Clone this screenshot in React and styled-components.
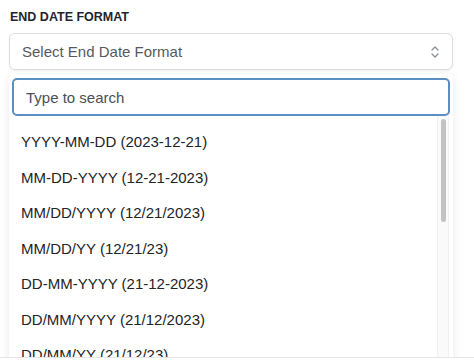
import React from 'react'
import styled, { createGlobalStyle } from 'styled-components'

const Global = createGlobalStyle`
    html, body {
        margin: 0;
        padding: 0;
        background: #ffffff;
        font-family: "Liberation Sans", Arial, sans-serif;
    }
    * {
        box-sizing: border-box;
    }
`;

const Page = styled.div`
    height: 358px;
    overflow: hidden;
    border-bottom: 1px solid #e6e6e6;
    padding: 10px 21px 0 9px;
`;

const Label = styled.div`
    font-size: 12.5px;
    font-weight: 700;
    letter-spacing: 0;
    color: #1f2430;
    padding-left: 1px;
    line-height: 15px;
`;

const Select = styled.div`
    margin-top: 8px;
    height: 37px;
    border: 1px solid #dcdcdc;
    border-radius: 6px;
    box-shadow: 0 1px 2px rgba(0, 0, 0, 0.05);
    display: flex;
    align-items: center;
    justify-content: space-between;
    padding: 0 12px 0 12px;
    font-size: 15px;
    color: #555a60;
`;

const Panel = styled.div`
    margin-top: 4px;
    padding: 4px 3px 0 3px;
    box-shadow: 0 2px 10px rgba(0, 0, 0, 0.09);
    border-radius: 4px;
`;

const Search = styled.input`
    width: 100%;
    height: 38px;
    border: 2px solid #5b8fc2;
    border-radius: 5px;
    padding: 0 12px;
    font-family: inherit;
    font-size: 15px;
    color: #333;
    outline: none;
    &::placeholder {
        color: #4a4f55;
    }
`;

const ListArea = styled.div`
    display: flex;
    height: 260px;
`;

const Items = styled.div`
    flex: 1;
    padding-top: 8px;
`;

const Item = styled.div`
    height: 35.5px;
    display: flex;
    align-items: center;
    padding-left: 9px;
    font-size: 15px;
    color: #222426;
`;

const Track = styled.div`
    width: 12px;
    margin-right: 1px;
    border-left: 1px solid #f0f0f0;
    border-right: 1px solid #f0f0f0;
    background: #fafafa;
    padding: 3px 2px 0 3px;
`;

const Thumb = styled.div`
    height: 103px;
    border-radius: 4px;
    background: #c2c2c2;
`;

const formats = [
    'YYYY-MM-DD (2023-12-21)',
    'MM-DD-YYYY (12-21-2023)',
    'MM/DD/YYYY (12/21/2023)',
    'MM/DD/YY (12/21/23)',
    'DD-MM-YYYY (21-12-2023)',
    'DD/MM/YYYY (21/12/2023)',
    'DD/MM/YY (21/12/23)',
    'DD.MM.YYYY (21.12.2023)',
];

function Chevrons() {
    return (
        <svg width="10" height="16" viewBox="0 0 10 16" fill="none" stroke="#8a8d92" strokeWidth="1.3" strokeLinecap="round" strokeLinejoin="round">
            <path d="M2 6 L5 3 L8 6" />
            <path d="M2 10 L5 13 L8 10" />
        </svg>
    )
}

export default function App() {
    return (
        <>
            <Global />
            <Page>
                <Label>END DATE FORMAT</Label>
                <Select>
                    <span>Select End Date Format</span>
                    <Chevrons />
                </Select>
                <Panel>
                    <Search placeholder="Type to search" />
                    <ListArea>
                        <Items>
                            {formats.map(f => <Item key={f}>{f}</Item>)}
                        </Items>
                        <Track>
                            <Thumb />
                        </Track>
                    </ListArea>
                </Panel>
            </Page>
        </>
    )
}
